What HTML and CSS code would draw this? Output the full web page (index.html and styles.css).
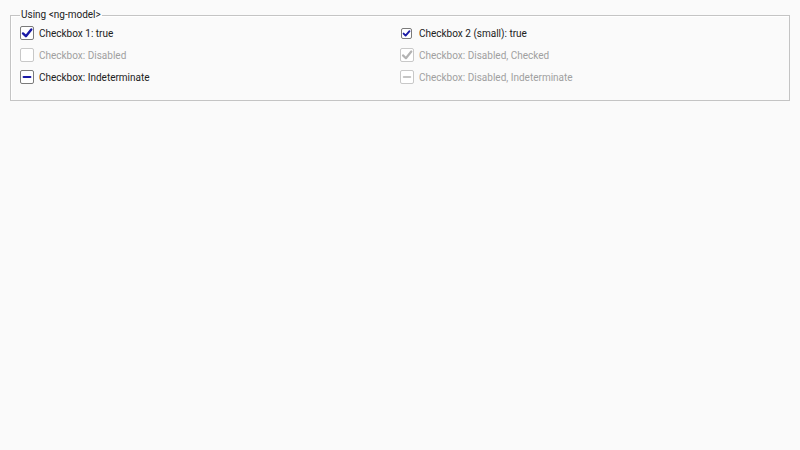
FILE: index.html
```html
<!DOCTYPE html>
<html>
<head>
<meta charset="utf-8">
<link rel="stylesheet" href="styles.css">
</head>
<body>
<fieldset class="group">
  <legend class="legend">Using &lt;ng-model&gt;</legend>
  <div class="grid">
    <label class="cb">
      <span class="box">
        <svg viewBox="0 0 14 14" width="14" height="14"><path d="M3 7.4 L5.9 10.2 L11.3 3.5" fill="none" stroke="#1a1aa6" stroke-width="2.4" stroke-linecap="round" stroke-linejoin="round"/></svg>
      </span>
      <span class="text">Checkbox 1: true</span>
    </label>
    <label class="cb">
      <span class="box small">
        <svg viewBox="0 0 11 11" width="11" height="11"><path d="M2.6 5.6 L4.6 7.6 L8.5 3.2" fill="none" stroke="#1a1aa6" stroke-width="1.9" stroke-linecap="round" stroke-linejoin="round"/></svg>
      </span>
      <span class="text">Checkbox 2 (small): true</span>
    </label>
    <label class="cb disabled">
      <span class="box"></span>
      <span class="text">Checkbox: Disabled</span>
    </label>
    <label class="cb disabled">
      <span class="box">
        <svg viewBox="0 0 14 14" width="14" height="14"><path d="M3 7.4 L5.9 10.2 L11.3 3.5" fill="none" stroke="#b3b3b3" stroke-width="2.2" stroke-linecap="round" stroke-linejoin="round"/></svg>
      </span>
      <span class="text">Checkbox: Disabled, Checked</span>
    </label>
    <label class="cb">
      <span class="box">
        <svg viewBox="0 0 14 14" width="14" height="14"><path d="M3.5 7 H10.5" stroke="#1a1aa6" stroke-width="1.8" stroke-linecap="round"/></svg>
      </span>
      <span class="text">Checkbox: Indeterminate</span>
    </label>
    <label class="cb disabled">
      <span class="box">
        <svg viewBox="0 0 14 14" width="14" height="14"><path d="M3.5 7 H10.5" stroke="#b3b3b3" stroke-width="1.5" stroke-linecap="round"/></svg>
      </span>
      <span class="text">Checkbox: Disabled, Indeterminate</span>
    </label>
  </div>
</fieldset>
</body>
</html>
```
FILE: styles.css
```css
html, body {
  background: #fafafa;
}
body {
  margin: 8px;
  font-family: Roboto, "Liberation Sans", sans-serif;
  font-size: 10px;
  color: #212121;
}
.group {
  margin: 0 2px;
  padding: 4px 9px 16px;
  border: 1px solid #c4c4c4;
  box-shadow: inset 1px 1px 0 #ffffff;
}
.legend {
  padding: 0 1px;
  margin-left: 0;
  font-size: 10px;
  line-height: 14px;
  color: #212121;
}
.grid {
  display: grid;
  grid-template-columns: 1fr 1fr;
  row-gap: 8px;
}
.cb {
  display: flex;
  align-items: center;
  gap: 5px;
  height: 14px;
}
.box {
  width: 14px;
  height: 14px;
  box-sizing: border-box;
  border: 1px solid #7a7a7a;
  border-radius: 2px;
  background: #ffffff;
  position: relative;
  flex: none;
}
.box svg {
  position: absolute;
  left: -1px;
  top: -1px;
}
.box.small {
  width: 11px;
  height: 11px;
  margin: 0 2px 0 1px;
}
.disabled .box {
  border-color: #c8c8c8;
}
.disabled .text {
  color: #a0a0a0;
}
```
